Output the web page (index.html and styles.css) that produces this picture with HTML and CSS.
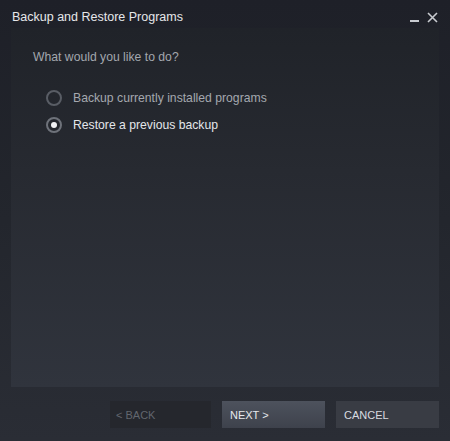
FILE: index.html
```html
<!DOCTYPE html>
<html lang="en">
<head>
    <meta charset="UTF-8">
    <title>Backup and Restore Programs</title>
    <link rel="stylesheet" href="styles.css">
</head>
<body>
    <div class="window">
        <div class="titlebar">
            <span class="title">Backup and Restore Programs</span>
            <span class="controls">
                <svg class="min" width="9" height="11" viewBox="0 0 9 11"><rect x="0" y="8" width="9" height="2" fill="#c8cbd0"/></svg>
                <svg class="close" width="11" height="11" viewBox="0 0 11 11"><path d="M1 1 L10 10 M10 1 L1 10" stroke="#c8cbd0" stroke-width="1.6"/></svg>
            </span>
        </div>
        <div class="panel">
            <div class="question">What would you like to do?</div>
            <div class="options">
                <label class="option">
                    <span class="radio"></span>
                    <span>Backup currently installed programs</span>
                </label>
                <label class="option selected">
                    <span class="radio"></span>
                    <span>Restore a previous backup</span>
                </label>
            </div>
        </div>
        <div class="buttons">
            <button class="btn disabled">&lt; BACK</button>
            <button class="btn primary">NEXT &gt;</button>
            <button class="btn">CANCEL</button>
        </div>
    </div>
</body>
</html>
```

FILE: styles.css
```css
html, body {
    margin: 0;
    height: 100%;
}
body {
    font-family: Arial, "Liberation Sans", sans-serif;
    background-color: #2a2d34;
}
.window {
    width: 450px;
    height: 441px;
    box-sizing: border-box;
    display: flex;
    flex-direction: column;
    background: linear-gradient(to bottom, #1e2028 0%, #23262d 50%, #2a2d35 100%);
}
.titlebar {
    height: 28px;
    display: flex;
    align-items: center;
    justify-content: space-between;
    padding: 0 12px;
    box-sizing: border-box;
}
.title {
    color: #e6e7ea;
    font-size: 12.5px;
    margin-top: 6px;
}
.controls {
    display: flex;
    align-items: center;
    gap: 8px;
    margin-top: 6px;
}
.panel {
    margin: 0 11px;
    height: 359px;
    background: linear-gradient(to bottom, #202329 0%, #272a31 40%, #30343d 100%);
    padding: 22px 22px 0 22px;
    box-sizing: border-box;
}
.question {
    color: #a3a7ae;
    font-size: 12.2px;
    line-height: 14px;
}
.options {
    margin-top: 26px;
    padding-left: 13px;
    display: flex;
    flex-direction: column;
    gap: 10.5px;
}
.option {
    display: flex;
    align-items: center;
    gap: 11px;
    color: #a4a8af;
    font-size: 12.2px;
    height: 16px;
}
.option.selected {
    color: #e4e6ea;
}
.radio {
    width: 16px;
    height: 16px;
    border-radius: 50%;
    border: 2px solid #595d65;
    box-sizing: border-box;
    position: relative;
}
.option.selected .radio {
    border-color: #6e727a;
}
.option.selected .radio::after {
    content: "";
    position: absolute;
    left: 3px;
    top: 3px;
    width: 6px;
    height: 6px;
    border-radius: 50%;
    background-color: #f2f3f5;
}
.buttons {
    display: flex;
    justify-content: flex-end;
    gap: 11px;
    padding: 14px 11px 0 0;
}
.btn {
    width: 103px;
    height: 27px;
    border: none;
    font-family: Arial, "Liberation Sans", sans-serif;
    font-size: 11px;
    text-align: left;
    padding: 0 8px;
    color: #d8dbe0;
    background-color: #393c44;
    cursor: pointer;
}
.btn.disabled {
    width: 101px;
    color: #62666e;
    background-color: #25272d;
    padding-left: 6px;
}
.btn.primary {
    color: #e6e8ec;
    background: linear-gradient(to bottom, #4d525d 0%, #3e424c 100%);
}
```
